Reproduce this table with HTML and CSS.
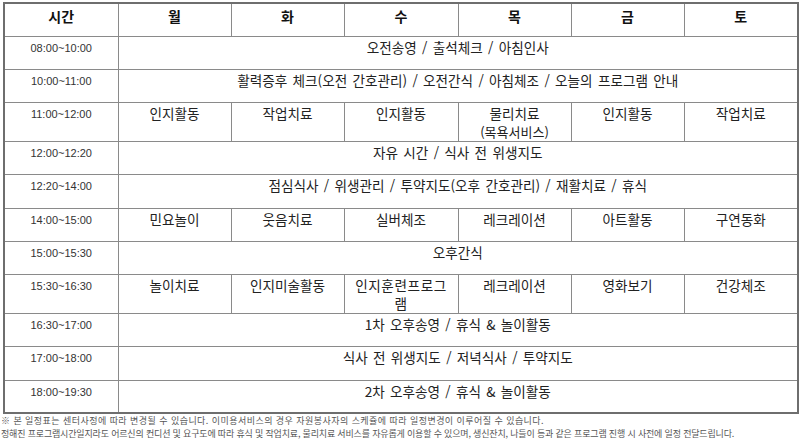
FILE: index.html
```html
<!DOCTYPE html>
<html lang="ko">
<head>
<meta charset="utf-8">
<link rel="stylesheet" href="styles.css">
</head>
<body>
<div class="page">
<table class="schedule">
<colgroup>
<col class="c-time"><col class="c-day"><col class="c-day"><col class="c-day2"><col class="c-day"><col class="c-day"><col class="c-day2">
</colgroup>
<thead>
<tr class="head"><th>시간</th><th>월</th><th>화</th><th>수</th><th>목</th><th>금</th><th>토</th></tr>
</thead>
<tbody>
<tr><td class="time">08:00~10:00</td><td colspan="6">오전송영 / 출석체크 / 아침인사</td></tr>
<tr><td class="time">10:00~11:00</td><td colspan="6">활력증후 체크(오전 간호관리) / 오전간식 / 아침체조 / 오늘의 프로그램 안내</td></tr>
<tr><td class="time">11:00~12:00</td><td>인지활동</td><td>작업치료</td><td>인지활동</td><td>물리치료<br><span class="paren">(목욕서비스)</span></td><td>인지활동</td><td>작업치료</td></tr>
<tr><td class="time">12:00~12:20</td><td colspan="6">자유 시간 / 식사 전 위생지도</td></tr>
<tr><td class="time">12:20~14:00</td><td colspan="6">점심식사 / 위생관리 / 투약지도(오후 간호관리) / 재활치료 / 휴식</td></tr>
<tr><td class="time">14:00~15:00</td><td>민요놀이</td><td>웃음치료</td><td>실버체조</td><td>레크레이션</td><td>아트활동</td><td>구연동화</td></tr>
<tr><td class="time">15:00~15:30</td><td colspan="6">오후간식</td></tr>
<tr><td class="time">15:30~16:30</td><td>놀이치료</td><td>인지미술활동</td><td class="wide-text">인지훈련프로그램</td><td>레크레이션</td><td>영화보기</td><td>건강체조</td></tr>
<tr><td class="time">16:30~17:00</td><td colspan="6">1차 오후송영 / 휴식 &amp; 놀이활동</td></tr>
<tr><td class="time">17:00~18:00</td><td colspan="6">식사 전 위생지도 / 저녁식사 / 투약지도</td></tr>
<tr><td class="time">18:00~19:30</td><td colspan="6">2차 오후송영 / 휴식 &amp; 놀이활동</td></tr>
</tbody>
</table>
<p class="note note-first">※ 본 일정표는 센터사정에 따라 변경될 수 있습니다. 이미용서비스의 경우 자원봉사자의 스케쥴에 따라 일정변경이 이루어질 수 있습니다.</p>
<p class="note">정해진 프로그램시간일지라도 어르신의 컨디션 및 요구도에 따라 휴식 및 작업치료, 물리치료 서비스를 자유롭게 이용할 수 있으며, 생신잔치, 나들이 등과 같은 프로그램 진행 시 사전에 일정 전달드립니다.</p>
</div>
</body>
</html>
```

FILE: styles.css
```css
html, body {
  margin: 0;
  padding: 0;
  background: #fff;
}
.page {
  padding: 2px 3px 0 3px;
  font-family: "Noto Sans CJK KR", "Noto Sans", sans-serif;
  color: #222;
}
.schedule {
  width: 794px;
  border-collapse: collapse;
  table-layout: fixed;
  border: 2px solid #6e6e6e;
}
.c-time { width: 114px; }
.c-day { width: 113px; }
.c-day2 { width: 114px; }
.schedule th,
.schedule td {
  border: 1px solid #8a8a8a;
  text-align: center;
  vertical-align: top;
  padding: 2px 4px 1px 4px;
  font-size: 13.6px;
  line-height: 17.5px;
  font-weight: normal;
  word-spacing: 1.5px;
  color: #222;
  word-break: break-all;
}
.schedule td.wide-text {
  letter-spacing: 0.6px;
  padding-left: 5px;
  padding-right: 5px;
}
.schedule tbody tr { height: 33.25px; }
.schedule thead tr { height: 33px; }
.schedule th {
  font-weight: bold;
  font-size: 14px;
  line-height: 20px;
  padding-top: 2px;
  color: #111;
}
.schedule td.time {
  font-family: "Liberation Sans", Arial, sans-serif;
  font-size: 11px;
  line-height: 17px;
  padding-top: 3px;
  word-spacing: 0;
  color: #333;
}
.paren {
  font-size: 13px;
}
.note {
  margin: 0 0 0 -2px;
  font-size: 9px;
  line-height: 13px;
  letter-spacing: -0.17px;
  color: #555;
  white-space: nowrap;
}
.note-first {
  letter-spacing: 0.45px;
}
```
